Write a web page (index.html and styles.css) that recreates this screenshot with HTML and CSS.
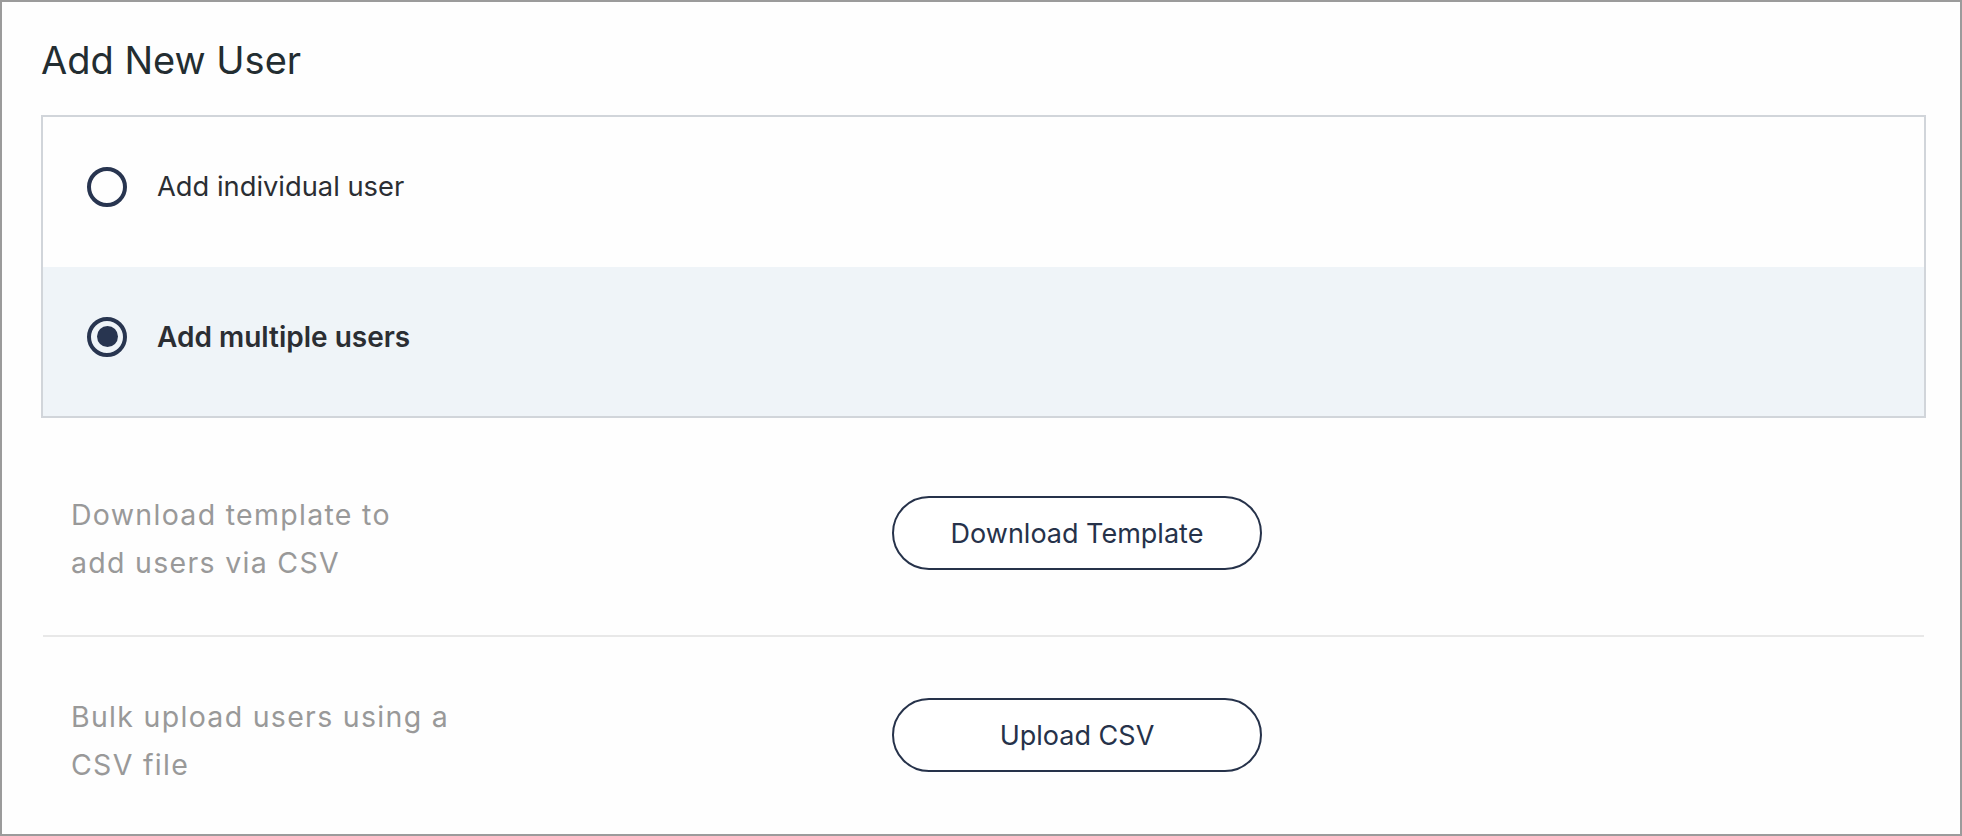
FILE: index.html
```html
<!DOCTYPE html>
<html lang="en">
<head>
<meta charset="utf-8">
<title>Add New User</title>
<link rel="stylesheet" href="styles.css">
</head>
<body>
<div class="frame">
  <h1 class="title">Add New User</h1>
  <div class="choice-box">
    <label class="choice">
      <span class="radio"></span>
      <span class="choice-label">Add individual user</span>
    </label>
    <label class="choice choice--selected">
      <span class="radio radio--on"><span class="radio-dot"></span></span>
      <span class="choice-label">Add multiple users</span>
    </label>
  </div>
  <div class="sections">
    <div class="section">
      <p class="section-text">Download template to<br>add users via CSV</p>
      <button class="pill-btn" type="button">Download Template</button>
    </div>
    <div class="section">
      <p class="section-text">Bulk upload users using a<br>CSV file</p>
      <button class="pill-btn" type="button">Upload CSV</button>
    </div>
  </div>
</div>
</body>
</html>
```

FILE: styles.css
```css
* { box-sizing: border-box; }
html, body {
  margin: 0;
  padding: 0;
  background: #ffffff;
}
body {
  font-family: Inter, "Noto Sans", "Liberation Sans", sans-serif;
  width: 1962px;
  height: 836px;
  overflow: hidden;
}
.frame {
  width: 1962px;
  height: 836px;
  border: 2px solid #9b9b9b;
  padding: 34px 34px 0 39px;
  overflow: hidden;
  background: #fefefe;
}
.title {
  margin: 0 0 31px 0;
  font-size: 38px;
  line-height: 48px;
  font-weight: 400;
  color: #232d31;
  letter-spacing: 0;
}
.choice-box {
  border: 2px solid #d1d5da;
  margin-bottom: 17px;
}
.choice {
  display: flex;
  align-items: center;
  height: 150px;
  padding: 50px 0 60px 44px;
  background: #fefefe;
}
.choice--selected {
  background: #eff4f8;
  height: 149px;
}
.radio {
  width: 40px;
  height: 40px;
  border: 4px solid #283550;
  border-radius: 50%;
  display: flex;
  align-items: center;
  justify-content: center;
  flex: none;
}
.radio-dot {
  width: 21px;
  height: 21px;
  border-radius: 50%;
  background: #283550;
}
.choice-label {
  margin-left: 30px;
  font-size: 27.3px;
  line-height: 34px;
  color: #2b2e33;
}
.choice--selected .choice-label {
  font-weight: 600;
  font-size: 28px;
}
.sections {
  margin: 0 2px;
}
.section {
  display: grid;
  grid-template-columns: 821px 370px;
  align-items: start;
  padding: 56px 28px 48px 28px;
  border-bottom: 2px solid #e8e8e8;
}
.section:last-child {
  border-bottom: none;
}
.section-text {
  margin: 0;
  font-size: 28.5px;
  line-height: 48px;
  letter-spacing: 1.3px;
  color: #999999;
}
.pill-btn {
  margin-top: 5px;
  height: 74px;
  width: 370px;
  border: 2px solid #26324a;
  border-radius: 37px;
  background: #ffffff;
  font-family: inherit;
  font-size: 27px;
  color: #26324a;
  padding: 0;
  cursor: pointer;
}
```
